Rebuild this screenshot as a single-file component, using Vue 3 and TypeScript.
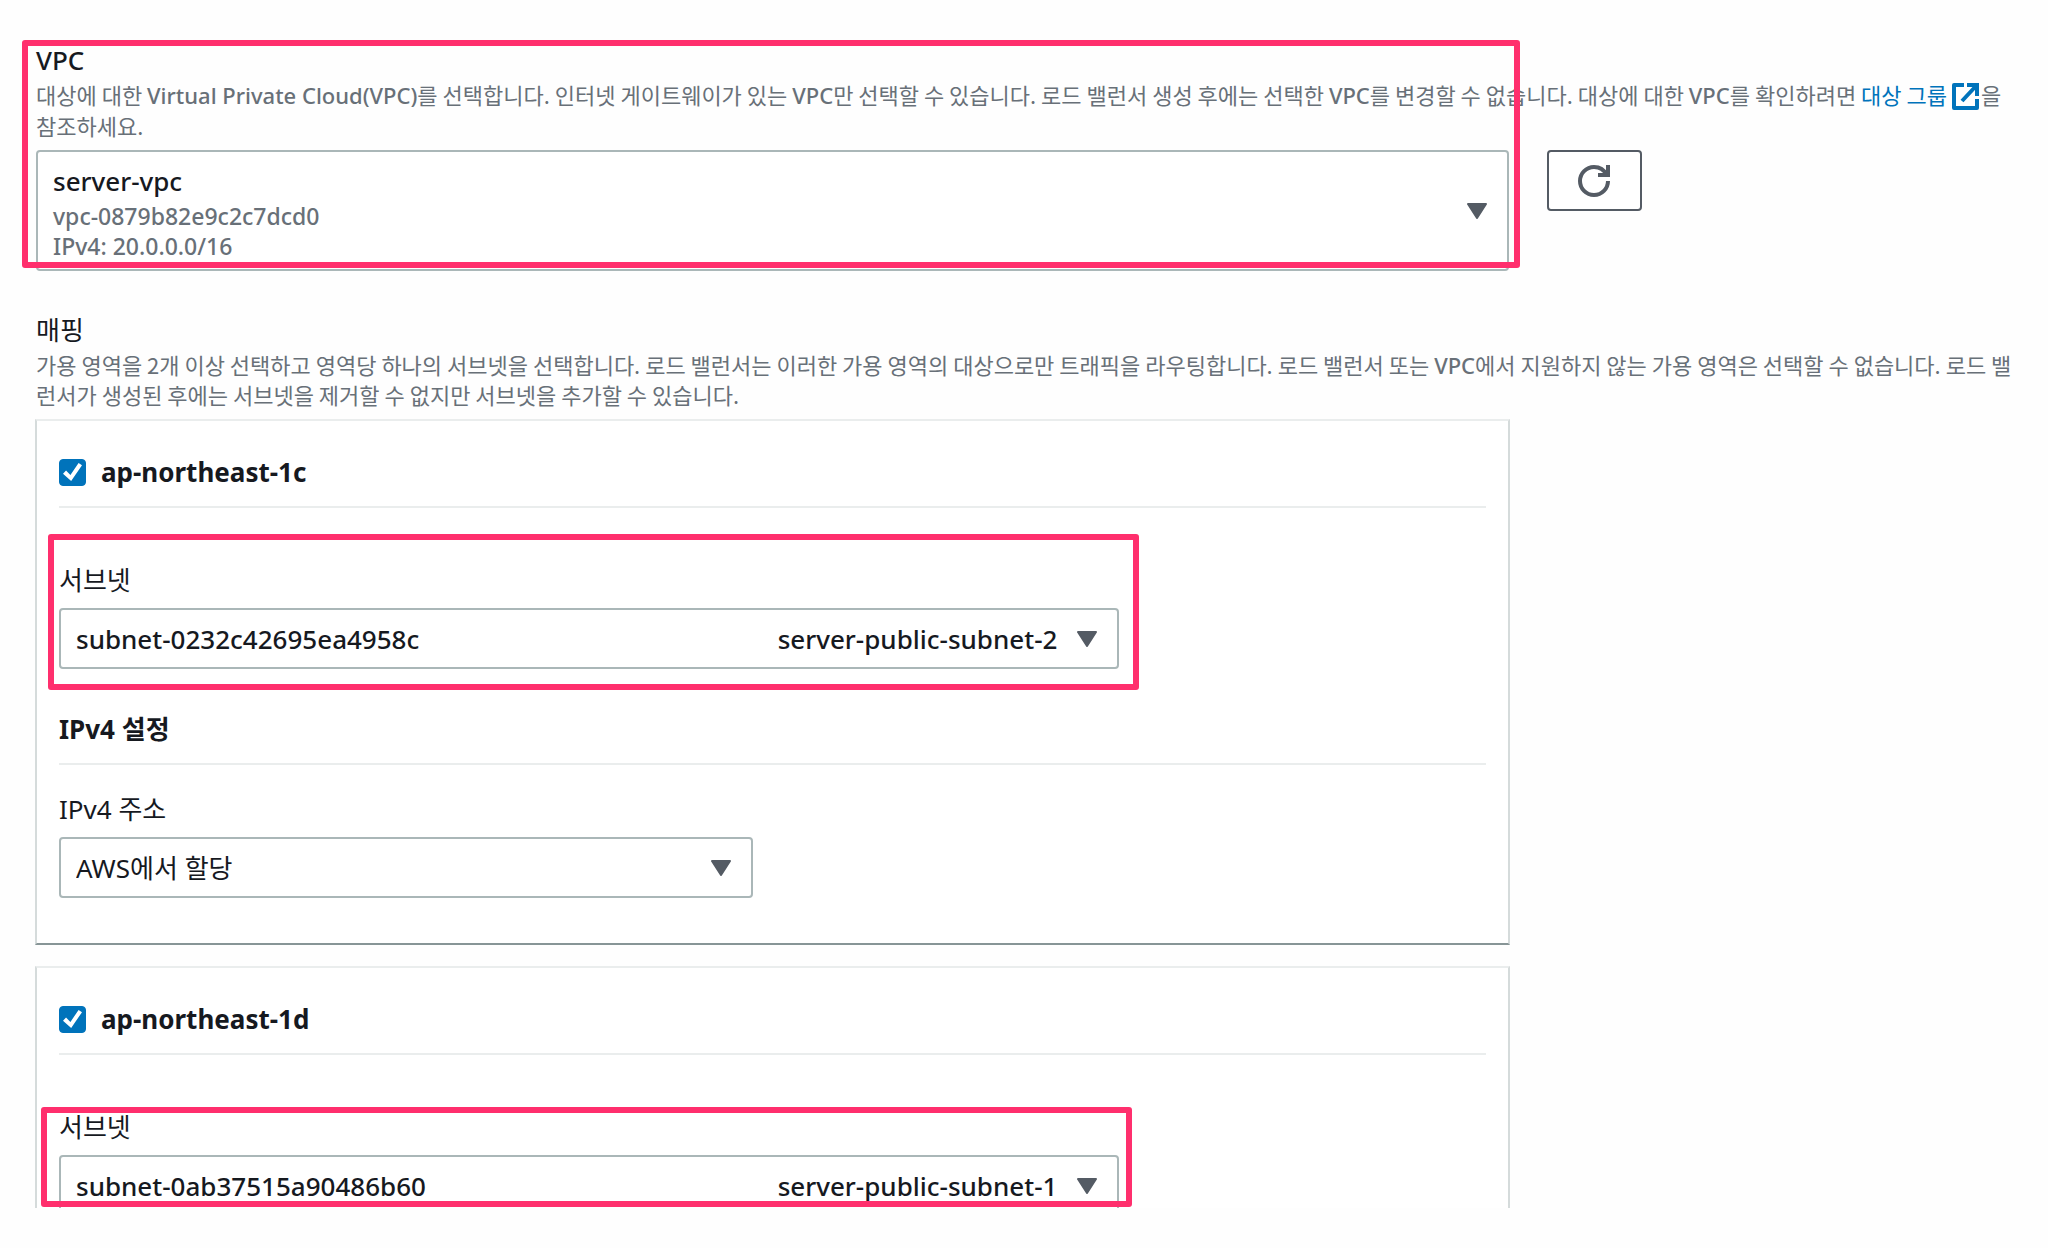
<script setup lang="ts">
import { ref } from 'vue'

interface Zone {
  name: string
  enabled: boolean
  subnetId: string
  subnetName: string
  address?: string
}

const vpc = ref('server-vpc')
const zones = ref<Zone[]>([
  {
    name: 'ap-northeast-1c',
    enabled: true,
    subnetId: 'subnet-0232c42695ea4958c',
    subnetName: 'server-public-subnet-2',
    address: 'AWS에서 할당',
  },
  {
    name: 'ap-northeast-1d',
    enabled: true,
    subnetId: 'subnet-0ab37515a90486b60',
    subnetName: 'server-public-subnet-1',
  },
])
</script>

<template>
  <main class="page">
    <section class="block">
      <label class="label strong" for="vpc">VPC</label>
      <p class="hint">
        대상에 대한 <span class="latin">Virtual Private Cloud(VPC)</span>를 선택합니다. 인터넷 게이트웨이가 있는 <span class="latin">VPC</span>만 선택할 수 있습니다. 로드 밸런서 생성 후에는 선택한 <span class="latin">VPC</span>를 변경할 수 없습니다. 대상에 대한 <span class="latin">VPC</span>를 확인하려면
        <a href="#" class="link">대상 그룹 <svg class="external" viewBox="0 0 27 27" aria-hidden="true">
          <path d="M12 2H2v23h23v-9" stroke-linejoin="round" />
          <path d="M15 2h10v11M24 3L10 18" />
        </svg></a>을 참조하세요.
      </p>
      <div class="columns">
        <div class="control wide tall">
          <select id="vpc" v-model="vpc" class="select">
            <option>server-vpc</option>
          </select>
          <div class="details">
            <span>vpc-0879b82e9c2c7dcd0</span>
            <span>IPv4: 20.0.0.0/16</span>
          </div>
          <svg class="caret" viewBox="0 0 20 16" aria-hidden="true">
            <path d="M1 1h18L10 15z" />
          </svg>
        </div>
        <button type="button" class="refresh" aria-label="새로 고침">
          <svg viewBox="0 0 16 16" aria-hidden="true">
            <path d="M15 8c0 3.87-3.13 7-7 7s-7-3.13-7-7 3.13-7 7-7c2.79 0 5.2 1.63 6.33 4" />
            <path d="M10 5h5V0" />
          </svg>
        </button>
      </div>
      <div class="marker marker-vpc"></div>
    </section>

    <section class="block">
      <h2 class="label">매핑</h2>
      <p class="hint">
        가용 영역을 2개 이상 선택하고 영역당 하나의 서브넷을 선택합니다. 로드 밸런서는 이러한 가용 영역의 대상으로만 트래픽을 라우팅합니다. 로드 밸런서 또는 <span class="latin">VPC</span>에서 지원하지 않는 가용 영역은 선택할 수 없습니다. 로드 밸런서가 생성된 후에는 서브넷을 제거할 수 없지만 서브넷을 추가할 수 있습니다.
      </p>
      <div class="columns">
        <div class="zones wide">
          <article v-for="(zone, i) in zones" :key="zone.name" class="card">
            <label class="heading">
              <input v-model="zone.enabled" type="checkbox" class="check" />
              {{ zone.name }}
            </label>
            <div class="field subnet">
              <label class="label" :for="`subnet-${i}`">서브넷</label>
              <div class="columns">
                <div class="control wide">
                  <select :id="`subnet-${i}`" v-model="zone.subnetId" class="select">
                    <option>{{ zone.subnetId }}</option>
                  </select>
                  <span class="name">{{ zone.subnetName }}</span>
                  <svg class="caret" viewBox="0 0 20 16" aria-hidden="true">
                    <path d="M1 1h18L10 15z" />
                  </svg>
                </div>
              </div>
              <div class="marker" :class="i === 0 ? 'marker-first' : 'marker-second'"></div>
            </div>
            <template v-if="zone.address">
              <h3 class="heading">IPv4 설정</h3>
              <div class="field">
                <label class="label" :for="`address-${i}`">IPv4 주소</label>
                <div class="columns">
                  <div class="control half">
                    <select :id="`address-${i}`" v-model="zone.address" class="select korean">
                      <option>AWS에서 할당</option>
                    </select>
                    <svg class="caret" viewBox="0 0 20 16" aria-hidden="true">
                      <path d="M1 1h18L10 15z" />
                    </svg>
                  </div>
                </div>
              </div>
            </template>
          </article>
        </div>
      </div>
    </section>
  </main>
</template>

<style>
body {
  background: #fefefe;
}
</style>

<style scoped>
.page {
  box-sizing: border-box;
  height: calc(100vh - 40px);
  overflow: hidden;
  padding: 44px 36px 0;
  font-family: "Noto Sans", "Noto Sans CJK KR", sans-serif;
  font-size: 26px;
  line-height: 32px;
  color: #16191f;
}

.block {
  position: relative;
  margin-bottom: 43px;
}

.label {
  display: block;
  margin: 0;
  font-size: 26px;
  font-weight: 400;
  line-height: 32px;
}

.strong {
  font-weight: 500;
}

.hint {
  margin: 3px 0 10px;
  font-family: "Noto Sans CJK KR", sans-serif;
  font-size: 22px;
  line-height: 30px;
  color: #687078;
}

.latin {
  font-family: "Noto Sans", sans-serif;
  font-weight: 500;
  line-height: 1;
}

.link {
  color: #0073bb;
  text-decoration: none;
}

.external {
  width: 27px;
  height: 27px;
  margin-right: 2px;
  vertical-align: -6px;
  fill: none;
  stroke: currentColor;
  stroke-width: 4;
}

.columns {
  display: grid;
  grid-template-columns: repeat(12, 1fr);
  column-gap: 38px;
  align-items: start;
}

.wide {
  grid-column: span 9;
}

.half {
  grid-column: span 6;
}

.control {
  display: grid;
  grid-template-columns: 1fr auto auto;
  align-items: center;
  height: 61px;
}

.select {
  grid-area: 1 / 1 / 2 / 4;
  box-sizing: border-box;
  width: 100%;
  height: 100%;
  padding: 0 16px 0 15px;
  appearance: none;
  border: 2px solid #aab7b8;
  border-radius: 4px;
  background: #fff;
  color: inherit;
  font: inherit;
  font-weight: 500;
}

.korean {
  font-weight: 400;
}

.caret {
  grid-area: 1 / 3;
  width: 20px;
  height: 16px;
  margin: 0 22px 0 20px;
  fill: #545b64;
  stroke: #545b64;
  stroke-width: 2;
  stroke-linejoin: round;
  pointer-events: none;
}

.name {
  grid-area: 1 / 2;
  font-weight: 500;
  pointer-events: none;
}

.tall {
  height: 121px;
}

.tall .select {
  padding-bottom: 60px;
}

.details {
  display: flex;
  flex-direction: column;
  grid-area: 1 / 1;
  align-self: end;
  padding: 0 0 10px 17px;
  font-size: 23px;
  font-weight: 500;
  line-height: 30px;
  color: #687078;
  pointer-events: none;
}

.refresh {
  display: grid;
  place-items: center;
  width: 95px;
  height: 61px;
  padding: 0;
  border: 2px solid #545b64;
  border-radius: 4px;
  background: #fff;
  color: #545b64;
}

.refresh svg {
  width: 32px;
  height: 32px;
  fill: none;
  stroke: currentColor;
  stroke-width: 2;
}

.zones {
  display: flex;
  flex-direction: column;
  gap: 21px;
  margin: 0 -1px;
}

.card {
  padding: 35px 22px 45px;
  border: 2px solid #d5dbdb;
  border-top-color: #eaeded;
  border-bottom-color: #879596;
  background: #fff;
}

.heading {
  display: flex;
  align-items: center;
  gap: 15px;
  margin: 0;
  padding-bottom: 18px;
  border-bottom: 2px solid #eaeded;
  font-size: 26px;
  font-weight: 700;
  line-height: 32px;
}

.check {
  display: grid;
  place-items: center;
  width: 27px;
  height: 27px;
  margin: 0;
  appearance: none;
  border: 1px solid #0073bb;
  border-radius: 4px;
  background: #fff;
}

.check:checked {
  background: #0073bb;
}

.check:checked::before {
  content: "";
  width: 19px;
  height: 18px;
  background: #fff;
  clip-path: polygon(0 60%, 16% 42%, 39% 66%, 82% 0, 100% 12%, 43% 100%);
}

.field {
  position: relative;
  padding-top: 28px;
}

.subnet {
  padding: 56px 0 44px;
}

.field .label {
  margin-bottom: 12px;
}

.marker {
  position: absolute;
  box-sizing: border-box;
  border: 6px solid #ff2f6d;
  border-radius: 3px;
  pointer-events: none;
}

.marker-vpc {
  top: -4px;
  left: -14px;
  width: calc(75% + 16px);
  height: 228px;
}

.marker-first {
  top: 26px;
  left: -11px;
  width: calc(75% + 21px);
  height: 156px;
}

.marker-second {
  top: 52px;
  left: -18px;
  width: calc(75% + 21px);
  height: 100px;
}
</style>
